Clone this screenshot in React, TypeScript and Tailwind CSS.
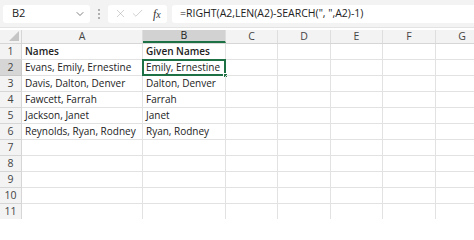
import { ChevronDown, X, Check } from "lucide-react";

const cols = ["A", "B", "C", "D", "E", "F", "G", ""];
const widths = ["w-[121px]", "w-[83px]", "w-[52px]", "w-[53px]", "w-[52px]", "w-[53px]", "w-[53px]", "w-[60px]"];

const rows: [string, string][] = [
  ["Names", "Given Names"],
  ["Evans, Emily, Ernestine", "Emily, Ernestine"],
  ["Davis, Dalton, Denver", "Dalton, Denver"],
  ["Fawcett, Farrah", "Farrah"],
  ["Jackson, Janet", "Janet"],
  ["Reynolds, Ryan, Rodney", "Ryan, Rodney"],
  ["", ""],
  ["", ""],
  ["", ""],
  ["", ""],
  ["", ""],
];

export default function App() {
  return (
    <div className="w-[474px] h-[219px] overflow-hidden bg-white text-[#222] font-['Open_Sans','Noto_Sans',sans-serif]">
      {/* formula bar */}
      <div className="h-[28px] bg-[#f3f3f3] border-b border-[#e3e3e3] flex items-center pl-[3px]">
        <div className="h-[18px] w-[87px] bg-white rounded-[3px] flex items-center justify-between pl-[9px] pr-[4px] text-[11px]">
          <span>B2</span>
          <ChevronDown size={12} strokeWidth={1.5} className="text-[#555]" />
        </div>
        <div className="w-[18px] flex flex-col items-center gap-[2px]">
          <span className="w-[2px] h-[2px] bg-[#999] rounded-full" />
          <span className="w-[2px] h-[2px] bg-[#999] rounded-full" />
          <span className="w-[2px] h-[2px] bg-[#999] rounded-full" />
        </div>
        <div className="h-[18px] w-[59px] bg-white rounded-[3px] flex items-center gap-[4px] pl-[6px]">
          <X size={13} strokeWidth={1} className="text-[#aaa]" />
          <Check size={13} strokeWidth={1} className="text-[#aaa]" />
          <span className="ml-[5px] text-[12px] italic font-['Liberation_Serif',serif] text-[#333]">
            f<span className="text-[10px]">x</span>
          </span>
        </div>
        <div className="ml-[5px] h-[18px] flex-1 bg-white rounded-l-[3px] flex items-center pl-[8px] text-[10.5px] whitespace-nowrap">
          =RIGHT(A2,LEN(A2)-SEARCH(", ",A2)-1)
        </div>
      </div>
      <div className="h-[2px] bg-white" />
      {/* column headers */}
      <div className="flex h-[14px] bg-[#f3f3f3] border-b border-[#d6d6d6] text-[10.5px] text-[#444]">
        <div className="w-[22px] shrink-0 relative border-r border-[#d6d6d6]">
          <div className="absolute right-[2px] bottom-[2px] w-0 h-0 border-l-[10px] border-l-transparent border-b-[10px] border-b-[#c5c5c5]" />
        </div>
        {cols.map((c, i) => (
          <div
            key={i}
            className={`${widths[i]} shrink-0 flex items-center justify-center border-r border-[#dedede] ${
              c === "B" ? "bg-[#d2d2d2] border-b-2 border-b-[#1e7145] text-[#222]" : ""
            }`}
          >
            {c}
          </div>
        ))}
      </div>
      {/* rows */}
      {rows.map((r, ri) => (
        <div key={ri} className="flex h-[16px] text-[10px]">
          <div
            className={`w-[22px] shrink-0 flex items-center justify-center border-b border-r text-[10.5px] text-[#444] ${
              ri === 1 ? "bg-[#d6d6d6] border-[#c8c8c8]" : "bg-[#f3f3f3] border-[#d6d6d6]"
            }`}
          >
            {ri + 1}
          </div>
          {cols.map((_, ci) => {
            const text = ci === 0 ? r[0] : ci === 1 ? r[1] : "";
            const selected = ri === 1 && ci === 1;
            return (
              <div
                key={ci}
                className={`${widths[ci]} shrink-0 relative flex items-center pl-[3px] whitespace-nowrap border-r border-b border-[#e2e2e2] ${
                  ri === 0 ? "font-semibold" : ""
                }`}
              >
                {text}
                {selected && (
                  <>
                    <div className="absolute -left-[1px] -top-[1px] -right-[1px] -bottom-[1px] border-2 border-[#1e7145]" />
                    <div className="absolute -right-[3px] -bottom-[3px] w-[5px] h-[5px] bg-[#1e7145] border border-white" />
                  </>
                )}
              </div>
            );
          })}
        </div>
      ))}
    </div>
  );
}
